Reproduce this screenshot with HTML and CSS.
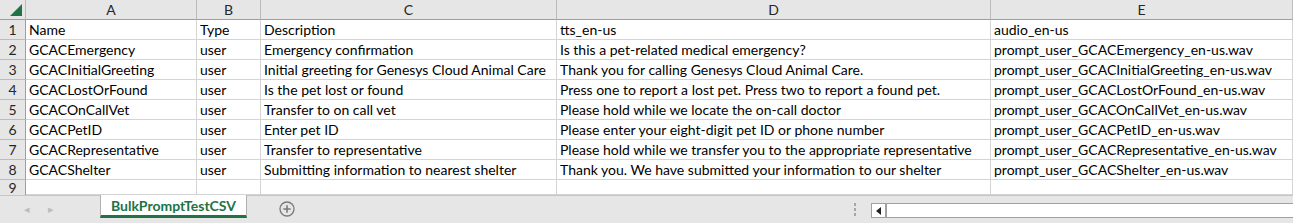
FILE: index.html
```html
<!DOCTYPE html>
<html>
<head>
<meta charset="utf-8">
<link rel="stylesheet" href="styles.css">
</head>
<body>
<div class="sheet">
  <div class="grid">
    <div class="corner"><svg width="12" height="12" viewBox="0 0 12 12"><polygon points="12,0 12,12 0,12" fill="#217346"/></svg></div>
    <div class="ch">A</div><div class="ch">B</div><div class="ch">C</div><div class="ch">D</div><div class="ch">E</div>

    <div class="rh">1</div><div class="c">Name</div><div class="c">Type</div><div class="c">Description</div><div class="c">tts_en-us</div><div class="c">audio_en-us</div>
    <div class="rh">2</div><div class="c">GCACEmergency</div><div class="c">user</div><div class="c">Emergency confirmation</div><div class="c">Is this a pet-related medical emergency?</div><div class="c">prompt_user_GCACEmergency_en-us.wav</div>
    <div class="rh">3</div><div class="c">GCACInitialGreeting</div><div class="c">user</div><div class="c">Initial greeting for Genesys Cloud Animal Care</div><div class="c">Thank you for calling Genesys Cloud Animal Care.</div><div class="c">prompt_user_GCACInitialGreeting_en-us.wav</div>
    <div class="rh">4</div><div class="c">GCACLostOrFound</div><div class="c">user</div><div class="c">Is the pet lost or found</div><div class="c">Press one to report a lost pet. Press two to report a found pet.</div><div class="c">prompt_user_GCACLostOrFound_en-us.wav</div>
    <div class="rh">5</div><div class="c">GCACOnCallVet</div><div class="c">user</div><div class="c">Transfer to on call vet</div><div class="c">Please hold while we locate the on-call doctor</div><div class="c">prompt_user_GCACOnCallVet_en-us.wav</div>
    <div class="rh">6</div><div class="c">GCACPetID</div><div class="c">user</div><div class="c">Enter pet ID</div><div class="c">Please enter your eight-digit pet ID or phone number</div><div class="c">prompt_user_GCACPetID_en-us.wav</div>
    <div class="rh">7</div><div class="c">GCACRepresentative</div><div class="c">user</div><div class="c">Transfer to representative</div><div class="c">Please hold while we transfer you to the appropriate representative</div><div class="c">prompt_user_GCACRepresentative_en-us.wav</div>
    <div class="rh">8</div><div class="c">GCACShelter</div><div class="c">user</div><div class="c">Submitting information to nearest shelter</div><div class="c">Thank you. We have submitted your information to our shelter</div><div class="c">prompt_user_GCACShelter_en-us.wav</div>
    <div class="rh last">9</div><div class="c"></div><div class="c"></div><div class="c"></div><div class="c"></div><div class="c"></div>
  </div>
  <div class="tabbar">
    <div class="navs"><span class="nav">&#9666;</span><span class="nav">&#9656;</span></div>
    <div class="tab">BulkPromptTestCSV</div>
    <div class="add"><svg width="16" height="16" viewBox="0 0 16 16"><circle cx="8" cy="8" r="7" fill="none" stroke="#7a7a7a" stroke-width="1.3"/><path d="M8 4.3v7.4M4.3 8h7.4" stroke="#7a7a7a" stroke-width="1.6"/></svg></div>
    <div class="spacer"></div>
    <div class="dots"><i></i><i></i><i></i></div>
    <div class="hscroll"><div class="arrow"><svg width="8" height="10" viewBox="0 0 8 10"><polygon points="6,1 6,9 1,5" fill="#222"/></svg></div></div>
  </div>
</div>
</body>
</html>
```
FILE: styles.css
```css
html, body {
  margin: 0;
  padding: 0;
  background: #ffffff;
  overflow: hidden;
}
.sheet {
  width: 1293px;
  height: 223px;
  display: flex;
  flex-direction: column;
  font-family: Lato, "Liberation Sans", sans-serif;
  font-size: 14px;
  color: #000;
}
.grid {
  display: grid;
  grid-template-columns: 26px 171px 64px 296px 434px 1fr;
  grid-template-rows: 20px repeat(8, 20px) 15px;
  height: 195px;
  overflow: hidden;
}
.grid > div {
  box-sizing: border-box;
  white-space: nowrap;
  overflow: hidden;
}
.corner {
  background: #e6e6e6;
  border-right: 1px solid #bcbcbc;
  border-bottom: 1px solid #9e9e9e;
  display: flex;
  align-items: flex-end;
  justify-content: flex-end;
  padding: 0 3px 3px 0;
}
.ch {
  background: #e6e6e6;
  border-right: 1px solid #bcbcbc;
  border-bottom: 1px solid #9e9e9e;
  text-align: center;
  line-height: 19px;
  color: #262626;
  font-size: 14px;
}
.rh {
  background: #e6e6e6;
  border-right: 1px solid #9e9e9e;
  border-bottom: 1px solid #bcbcbc;
  text-align: center;
  line-height: 19px;
  color: #262626;
}
.grid > .rh.last {
  line-height: 15px;
  border-bottom: none;
}
.c {
  border-right: 1px solid #d4d4d4;
  border-bottom: 1px solid #d4d4d4;
  padding-left: 3px;
  line-height: 20px;
  padding-top: 0px;
}
.tabbar {
  flex: 1;
  background: #e6e6e6;
  border-top: 1px solid #c6c6c6;
  display: flex;
  align-items: flex-start;
  position: relative;
}
.navs {
  width: 100px;
  display: flex;
  gap: 18px;
  padding-left: 24px;
  box-sizing: border-box;
  color: #bdbdbd;
  font-size: 11px;
  line-height: 26px;
}
.tab {
  margin-top: -1px;
  height: 23px;
  width: 147px;
  box-sizing: border-box;
  background: #ffffff;
  border-left: 1px solid #b0b0b0;
  border-right: 1px solid #b0b0b0;
  border-bottom: 3px solid #217346;
  color: #217346;
  font-weight: bold;
  text-align: center;
  line-height: 22px;
  font-size: 14px;
}
.add {
  width: 80px;
  display: flex;
  justify-content: center;
  padding-top: 5px;
}
.spacer { flex: 1; }
.dots {
  width: 16px;
  display: flex;
  flex-direction: column;
  align-items: center;
  gap: 2px;
  padding-top: 7px;
  margin-right: 8px;
}
.dots i {
  width: 2px;
  height: 3px;
  background: #a6a6a6;
}
.hscroll {
  width: 422px;
  height: 15px;
  margin-top: 7px;
  box-sizing: border-box;
  border: 1px solid #a0a0a0;
  border-right: none;
  background: #ffffff;
  display: flex;
}
.arrow {
  width: 15px;
  height: 13px;
  box-sizing: border-box;
  border-right: 2px solid #a0a0a0;
  display: flex;
  align-items: center;
  justify-content: center;
}
```
